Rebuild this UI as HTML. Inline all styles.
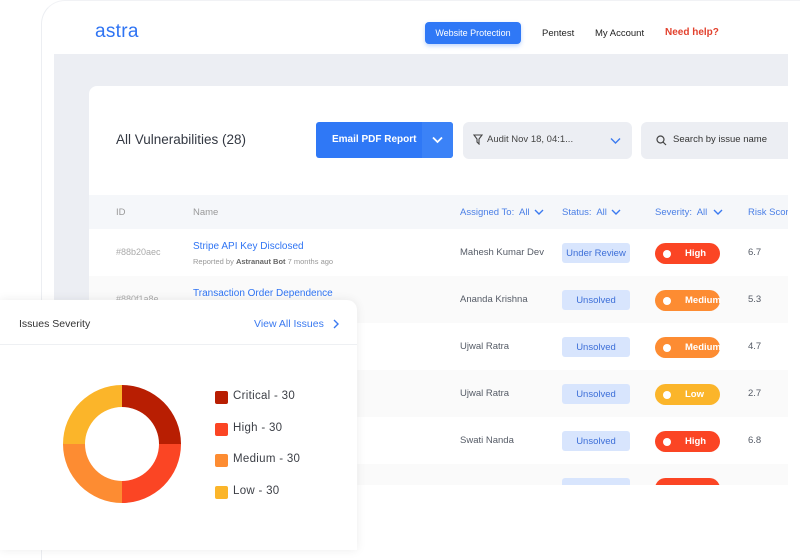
<!DOCTYPE html>
<html><head><style>
*{margin:0;padding:0;box-sizing:border-box}
body{width:800px;height:543px;overflow:hidden;background:#fff;font-family:"Liberation Sans",sans-serif;position:relative}
.abs{position:absolute}
.frame{left:41px;top:0;width:800px;height:560px;border-left:1px solid #eceef2;border-top:1px solid #f1f2f5;border-radius:24px 0 0 0}
.gray{left:54px;top:54px;width:734px;height:431px;background:#eceef3}
.card{left:89px;top:86px;width:699px;height:399px;background:#fff;border-radius:8px 0 0 0;overflow:hidden}
.t{position:absolute;white-space:nowrap}
.row{position:absolute;left:0;width:699px;height:47px}
.st{position:absolute;left:473px;width:68px;height:20px;background:#d8e5fd;border-radius:3px;color:#3d6fd8;font-size:9.5px;display:flex;align-items:center;justify-content:center}
.sv{position:absolute;left:566px;width:65px;height:21px;border-radius:11px;color:#fff;font-size:9.5px;font-weight:bold;display:flex;align-items:center;padding-left:30px}
.sv:before{content:"";position:absolute;left:8px;top:6.5px;width:8px;height:8px;border-radius:50%;background:#fff}
.hi{background:#fb4524}.me{background:#fd8c32}.lo{background:#fbb52a}
.nm{color:#555b66;font-size:9.5px}
.rs{color:#555b66;font-size:9.5px;left:659px}
.sev{left:0;top:300px;width:357px;height:250px;background:#fff;border-radius:0 10px 0 0;box-shadow:0 0 10px rgba(0,0,0,.08)}
.lg{position:absolute;left:215px;width:13px;height:13px;border-radius:2px}
.lt{position:absolute;left:233px;font-size:11.5px;color:#3c3f46;letter-spacing:.3px}
</style></head><body>
<div class="abs frame"></div>
<div class="abs" style="left:0;top:300px;width:41px;border-top:1px solid #e6e8ee"></div>
<div class="t" style="left:95px;top:21px;font-size:19px;color:#2f74f3;letter-spacing:.3px">astra</div>
<div class="abs" style="left:425px;top:22px;width:96px;height:22px;background:#2f78f6;border-radius:4px;color:#fff;font-size:9px;line-height:22px;text-align:center;box-shadow:0 2px 4px rgba(47,120,246,.3)">Website Protection</div>
<div class="t" style="left:542px;top:28px;font-size:9.5px;color:#222">Pentest</div>
<div class="t" style="left:595px;top:28px;font-size:9.5px;color:#222">My Account</div>
<div class="t" style="left:665px;top:27px;font-size:10px;color:#e2412d;font-weight:bold">Need help?</div>
<div class="abs gray"></div>
<div class="abs card">
 <div class="t" style="left:27px;top:46px;font-size:13.5px;color:#333842">All Vulnerabilities (28)</div>
 <div class="abs" style="left:227px;top:36px;width:137px;height:36px;background:#2f78f6;border-radius:3px"></div>
 <div class="abs" style="left:333px;top:36px;width:31px;height:36px;background:#3b82f7;border-radius:0 3px 3px 0"></div>
 <div class="t" style="left:243px;top:48px;font-size:10px;color:#fff;font-weight:bold">Email PDF Report</div>
 <svg class="abs" style="left:343px;top:50px" width="11" height="8"><path d="M1 1.5L5.5 6 10 1.5" stroke="#fff" stroke-width="1.8" fill="none"/></svg>
 <div class="abs" style="left:374px;top:36px;width:169px;height:37px;background:#eceef3;border-radius:6px"></div>
 <svg class="abs" style="left:384px;top:48px" width="10" height="11"><path d="M1 1h8L6 5v5L4 8V5z" stroke="#444" stroke-width="1.1" fill="none"/></svg>
 <div class="t" style="left:398px;top:48px;font-size:9.5px;color:#444">Audit Nov 18, 04:1...</div>
 <svg class="abs" style="left:521px;top:51px" width="11" height="8"><path d="M1 1.5L5.5 6 10 1.5" stroke="#3b7af0" stroke-width="1.4" fill="none"/></svg>
 <div class="abs" style="left:552px;top:36px;width:160px;height:37px;background:#eceef3;border-radius:6px"></div>
 <svg class="abs" style="left:567px;top:49px" width="11" height="11"><circle cx="4.5" cy="4.5" r="3.5" stroke="#444" stroke-width="1.2" fill="none"/><path d="M7 7l3 3" stroke="#444" stroke-width="1.2"/></svg>
 <div class="t" style="left:584px;top:48px;font-size:9.5px;color:#333">Search by issue name</div>
 <div class="abs" style="left:0;top:109px;width:699px;height:34px;background:#f5f7fa"></div>
 <div class="t" style="left:27px;top:121px;font-size:9.5px;color:#999">ID</div>
 <div class="t" style="left:104px;top:121px;font-size:9.5px;color:#999">Name</div>
 <div class="t" style="left:371px;top:121px;font-size:9.5px;color:#4a7fe6">Assigned To:&nbsp; All</div>
 <div class="t" style="left:473px;top:121px;font-size:9.5px;color:#4a7fe6">Status:&nbsp; All</div>
 <div class="t" style="left:566px;top:121px;font-size:9.5px;color:#4a7fe6">Severity:&nbsp; All</div>
 <div class="t" style="left:659px;top:121px;font-size:9.5px;color:#4a7fe6">Risk Score</div>
 <svg class="abs" style="left:0;top:0" width="699" height="200"><g stroke="#3b7af0" stroke-width="1.4" fill="none"><path d="M446 124l4 4 4-4"/><path d="M523 124l4 4 4-4"/><path d="M625 124l4 4 4-4"/></g></svg>

 <div class="row" style="top:143px;background:#fff">
  <div class="t" style="left:27px;top:18px;font-size:9px;color:#aaa">#88b20aec</div>
  <div class="t" style="left:104px;top:12px;font-size:10px;color:#2f74f3">Stripe API Key Disclosed</div>
  <div class="t" style="left:104px;top:28px;font-size:7.5px;color:#999">Reported by <b style="color:#666">Astranaut Bot</b> 7 months ago</div>
  <div class="t nm" style="left:371px;top:18px">Mahesh Kumar Dev</div>
  <div class="st" style="top:14px">Under Review</div>
  <div class="sv hi" style="top:14px">High</div>
  <div class="t rs" style="top:18px">6.7</div>
 </div>
 <div class="row" style="top:190px;background:#fafafa">
  <div class="t" style="left:27px;top:18px;font-size:9px;color:#aaa">#880f1a8e</div>
  <div class="t" style="left:104px;top:12px;font-size:10px;color:#2f74f3">Transaction Order Dependence</div>
  <div class="t nm" style="left:371px;top:18px">Ananda Krishna</div>
  <div class="st" style="top:14px">Unsolved</div>
  <div class="sv me" style="top:14px">Medium</div>
  <div class="t rs" style="top:18px">5.3</div>
 </div>
 <div class="row" style="top:237px;background:#fff">
  <div class="t nm" style="left:371px;top:18px">Ujwal Ratra</div>
  <div class="st" style="top:14px">Unsolved</div>
  <div class="sv me" style="top:14px">Medium</div>
  <div class="t rs" style="top:18px">4.7</div>
 </div>
 <div class="row" style="top:284px;background:#fafafa">
  <div class="t" style="left:240px;top:12px;font-size:10px;color:#2f74f3">ticity</div>
  <div class="t nm" style="left:371px;top:18px">Ujwal Ratra</div>
  <div class="st" style="top:14px">Unsolved</div>
  <div class="sv lo" style="top:14px">Low</div>
  <div class="t rs" style="top:18px">2.7</div>
 </div>
 <div class="row" style="top:331px;background:#fff">
  <div class="t nm" style="left:371px;top:18px">Swati Nanda</div>
  <div class="st" style="top:14px">Unsolved</div>
  <div class="sv hi" style="top:14px">High</div>
  <div class="t rs" style="top:18px">6.8</div>
 </div>
 <div class="row" style="top:378px;background:#fafafa">
  <div class="t" style="left:240px;top:12px;font-size:10px;color:#2f74f3">(XSS)</div>
  <div class="st" style="top:14px"></div>
  <div class="sv hi" style="top:14px;padding:0"></div>
 </div>
</div>

<div class="abs sev">
 <div class="t" style="left:19px;top:18px;font-size:10.5px;color:#333">Issues Severity</div>
 <div class="t" style="left:254px;top:18px;font-size:10.5px;color:#3b7af0">View All Issues</div>
 <svg class="abs" style="left:332px;top:19px" width="8" height="10"><path d="M2 1l4 4-4 4" stroke="#3b7af0" stroke-width="1.4" fill="none"/></svg>
 <div class="abs" style="left:0;top:44px;width:357px;border-top:1px solid #eef0f3"></div>
 <svg class="abs" style="left:0;top:0" width="357" height="243">
  <g transform="translate(122,144)">
   <path d="M0-59A59 59 0 0 1 59 0L37 0A37 37 0 0 0 0-37Z" fill="#b81e02"/>
   <path d="M59 0A59 59 0 0 1 0 59L0 37A37 37 0 0 0 37 0Z" fill="#fb4524"/>
   <path d="M0 59A59 59 0 0 1-59 0L-37 0A37 37 0 0 0 0 37Z" fill="#fd8c32"/>
   <path d="M-59 0A59 59 0 0 1 0-59L0-37A37 37 0 0 0-37 0Z" fill="#fbb52a"/>
  </g>
 </svg>
 <div class="lg" style="top:91px;background:#b81e02"></div><div class="lt" style="top:90px">Critical - 30</div>
 <div class="lg" style="top:123px;background:#fb4524"></div><div class="lt" style="top:122px">High - 30</div>
 <div class="lg" style="top:154px;background:#fd8c32"></div><div class="lt" style="top:153px">Medium - 30</div>
 <div class="lg" style="top:186px;background:#fbb52a"></div><div class="lt" style="top:185px">Low - 30</div>
</div>
</body></html>
